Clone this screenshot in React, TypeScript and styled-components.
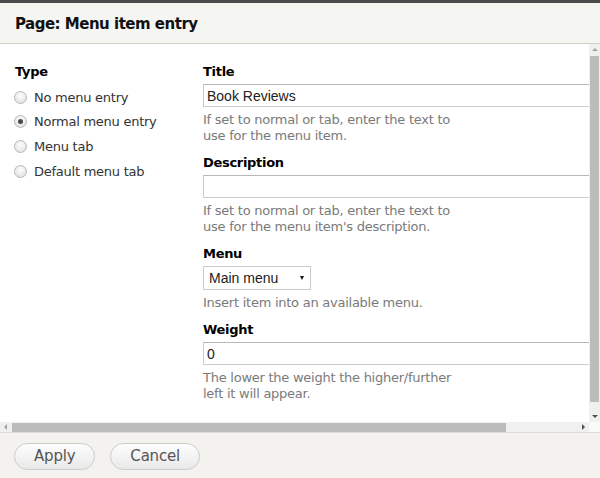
import styled, { createGlobalStyle } from 'styled-components';

const GlobalStyle = createGlobalStyle`
  html, body {
    margin: 0;
    padding: 0;
    background: #fff;
  }
  body {
    font-family: "DejaVu Sans", Verdana, sans-serif;
  }
`;

const Dialog = styled.div`
  width: 600px;
  height: 478px;
  display: flex;
  flex-direction: column;
  overflow: hidden;
`;
const TopStrip = styled.div`
  height: 3px;
  background: #4b4b4b;
`;
const Header = styled.header`
  box-sizing: border-box;
  height: 41px;
  display: flex;
  align-items: center;
  padding: 2px 0 0 15px;
  background: #f5f5f1;
  border-bottom: 1px solid #cfcfcf;
`;
const Heading = styled.h1`
  margin: 0;
  font-size: 15px;
  font-weight: 700;
  letter-spacing: -0.5px;
  color: #111;
`;
const Viewport = styled.div`
  flex: 1;
  display: grid;
  grid-template-columns: 1fr 11px;
  grid-template-rows: 1fr 11px;
  min-height: 0;
`;
const Content = styled.div`
  overflow: hidden;
  display: flex;
  padding: 19px 0 0 14px;
  background: #fff;
`;
const TypeColumn = styled.div`
  width: 189px;
  flex-shrink: 0;
`;
const FieldsColumn = styled.div`
  flex: 1;
  min-width: 0;
`;
const Label = styled.div`
  font-size: 13px;
  font-weight: 700;
  letter-spacing: -0.3px;
  line-height: 18px;
  color: #000;
  margin-bottom: 3px;
`;
const TypeLabel = styled(Label)`
  padding-left: 1px;
  margin-bottom: 4px;
`;
const RadioRow = styled.label`
  display: flex;
  align-items: center;
  gap: 7px;
  height: 24.6px;
  font-size: 13px;
  letter-spacing: -0.25px;
  color: #333;
`;
const RadioDot = styled.span<{ $checked?: boolean }>`
  position: relative;
  width: 11px;
  height: 11px;
  border-radius: 50%;
  border: 1px solid #b8b8b8;
  background: radial-gradient(circle at 50% 35%, #fdfdfd 0%, #e6e6e6 70%, #d6d6d6 100%);
  &::after {
    content: '';
    display: ${(p) => (p.$checked ? 'block' : 'none')};
    position: absolute;
    left: 3px;
    top: 3px;
    width: 5px;
    height: 5px;
    border-radius: 50%;
    background: #4a4a4a;
  }
`;
const Field = styled.div`
  margin-bottom: 10px;
`;
const TextInput = styled.div`
  box-sizing: border-box;
  width: 420px;
  height: 23px;
  border: 1px solid #cccccc;
  border-top-color: #b8b8b8;
  padding: 0 3px;
  display: flex;
  align-items: center;
  font-family: "Liberation Sans", Arial, sans-serif;
  font-size: 14px;
  color: #222;
`;
const Select = styled.div`
  box-sizing: border-box;
  width: 108px;
  height: 24px;
  border: 1px solid #cccccc;
  padding: 0 6px 0 5px;
  display: flex;
  align-items: center;
  justify-content: space-between;
  font-family: "Liberation Sans", Arial, sans-serif;
  font-size: 14px;
  color: #222;
`;
const SelectArrow = styled.span`
  width: 0;
  height: 0;
  border-left: 2.5px solid transparent;
  border-right: 2.5px solid transparent;
  border-top: 4px solid #111;
`;
const Help = styled.div`
  margin-top: 5px;
  max-width: 262px;
  font-size: 13px;
  letter-spacing: -0.25px;
  line-height: 16px;
  color: #7a7a7a;
`;
const VTrack = styled.div`
  background: #f0f0f0;
  display: flex;
  flex-direction: column;
  align-items: center;
`;
const HTrack = styled.div`
  background: #f0f0f0;
  display: flex;
  align-items: center;
  border-bottom: 1px solid #dcdcdc;
`;
const Corner = styled.div`
  background: #fafafa;
  border-bottom: 1px solid #dcdcdc;
`;
const ArrowBox = styled.div`
  width: 11px;
  height: 11px;
  display: flex;
  align-items: center;
  justify-content: center;
  flex-shrink: 0;
`;
const Triangle = styled.span<{ $dir: 'up' | 'down' | 'left' | 'right'; $dim?: boolean }>`
  width: 0;
  height: 0;
  ${(p) => {
    const c = p.$dim ? '#a3a3a3' : '#505050';
    switch (p.$dir) {
      case 'up':
        return `border-left: 3px solid transparent; border-right: 3px solid transparent; border-bottom: 3px solid ${c};`;
      case 'down':
        return `border-left: 3px solid transparent; border-right: 3px solid transparent; border-top: 3px solid ${c};`;
      case 'left':
        return `border-top: 3px solid transparent; border-bottom: 3px solid transparent; border-right: 3px solid ${c};`;
      default:
        return `border-top: 3px solid transparent; border-bottom: 3px solid transparent; border-left: 3px solid ${c};`;
    }
  }}
`;
const VThumb = styled.div`
  width: 9px;
  height: 346px;
  margin-top: 1px;
  background: #bcbcbc;
`;
const VSpace = styled.div`
  flex: 1;
`;
const HThumb = styled.div`
  width: 494px;
  height: 9px;
  margin-left: 1px;
  background: #bcbcbc;
`;
const Footer = styled.footer`
  height: 45px;
  display: flex;
  align-items: center;
  gap: 15px;
  padding-left: 14px;
  background: #f3f2ee;
`;
const Button = styled.button`
  box-sizing: border-box;
  height: 27px;
  padding: 0 19px;
  border-radius: 14px;
  border: 1px solid #cbcbcb;
  background: linear-gradient(#fdfdfd, #e9e9e9);
  font-family: "DejaVu Sans", Verdana, sans-serif;
  font-size: 15px;
  letter-spacing: -0.2px;
  color: #555;
  margin-top: 1px;
`;

const types = ['No menu entry', 'Normal menu entry', 'Menu tab', 'Default menu tab'];

export default function App() {
  return (
    <Dialog>
      <GlobalStyle />
      <TopStrip />
      <Header>
        <Heading>Page: Menu item entry</Heading>
      </Header>
      <Viewport>
        <Content>
          <TypeColumn>
            <TypeLabel>Type</TypeLabel>
            {types.map((t, i) => (
              <RadioRow key={t}>
                <RadioDot $checked={i === 1} />
                {t}
              </RadioRow>
            ))}
          </TypeColumn>
          <FieldsColumn>
            <Field>
              <Label>Title</Label>
              <TextInput>Book Reviews</TextInput>
              <Help>If set to normal or tab, enter the text to use for the menu item.</Help>
            </Field>
            <Field>
              <Label>Description</Label>
              <TextInput />
              <Help>If set to normal or tab, enter the text to use for the menu item's description.</Help>
            </Field>
            <Field>
              <Label>Menu</Label>
              <Select>
                Main menu
                <SelectArrow />
              </Select>
              <Help>Insert item into an available menu.</Help>
            </Field>
            <Field>
              <Label>Weight</Label>
              <TextInput>0</TextInput>
              <Help>The lower the weight the higher/further left it will appear.</Help>
            </Field>
          </FieldsColumn>
        </Content>
        <VTrack>
          <ArrowBox>
            <Triangle $dir="up" $dim />
          </ArrowBox>
          <VThumb />
          <VSpace />
          <ArrowBox>
            <Triangle $dir="down" />
          </ArrowBox>
        </VTrack>
        <HTrack>
          <ArrowBox>
            <Triangle $dir="left" $dim />
          </ArrowBox>
          <HThumb />
          <VSpace />
          <ArrowBox>
            <Triangle $dir="right" />
          </ArrowBox>
        </HTrack>
        <Corner />
      </Viewport>
      <Footer>
        <Button>Apply</Button>
        <Button>Cancel</Button>
      </Footer>
    </Dialog>
  );
}
